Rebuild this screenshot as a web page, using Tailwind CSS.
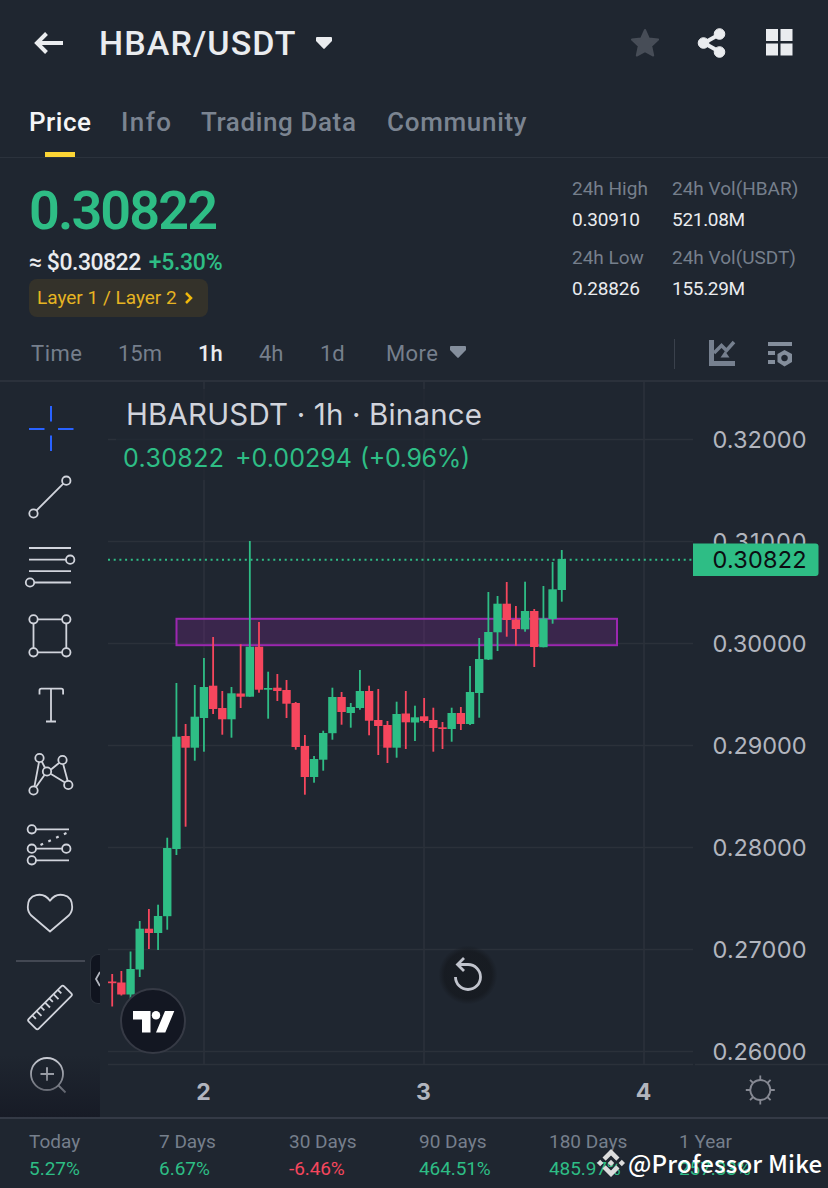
<!DOCTYPE html>
<html lang="en">
<head>
    <meta charset="UTF-8">
    <meta name="viewport" content="width=device-width, initial-scale=1.0">
    <title>HBAR/USDT</title>
    <script src="https://cdn.jsdelivr.net/npm/@tailwindcss/browser@4"></script>
</head>
<body class="bg-[#1f2630] font-['Roboto',sans-serif] text-[#eaecef]">
    <div class="relative w-[828px] h-[1188px] overflow-hidden flex flex-col">
        <!-- Header -->
        <header class="h-[85px] shrink-0 flex items-center pl-[34px] pr-[34px]">
            <svg class="w-[29px] h-[24px]" viewBox="0 0 29 24" fill="none" stroke="#eaecef" stroke-width="4">
                <path d="M29 12H3M12.500 2.500L3 12l9.500 9.500" />
            </svg>
            <h1 class="ml-[36px] w-[196px] text-[34px] leading-[40px] font-medium tracking-[1.1px] whitespace-nowrap">HBAR/USDT</h1>
            <svg class="ml-[21px] w-[16px] h-[12px]" viewBox="0 0 16 12" fill="#eaecef"><path d="M1 0h14q1 0 1 1v3L8.700 11.600q-.7.7-1.400 0L0 4V1q0-1 1-1z" /></svg>
            <div class="ml-auto flex items-center">
                <svg class="w-[30px] h-[30px]" viewBox="0 0 30 30" fill="#474d57" stroke="#474d57" stroke-width="2" stroke-linejoin="round"><path d="M15 2l3.900 8.600 9.200 1-6.900 6.300 2 9.600L15 23l-8.200 4.500 2-9.600-6.900-6.300 9.200-1z" /></svg>
                <svg class="ml-[37px] w-[30px] h-[30px]" viewBox="0 0 30 30" fill="#eaecef" stroke="#eaecef">
                    <path d="M23 6L7 15l16 9" fill="none" stroke-width="4" />
                    <circle cx="22.500" cy="6" r="5.300" /><circle cx="6.500" cy="15" r="5.300" /><circle cx="22.500" cy="24" r="5.300" />
                </svg>
                <svg class="ml-[39px] mr-px w-[27px] h-[27px]" viewBox="0 0 27 27" fill="#eaecef"><path d="M0 0h12v12H0zM14.500 0h12v12h-12zM0 14.500h12v12H0zM14.500 14.500h12v12h-12z" /></svg>
            </div>
        </header>

        <!-- Tabs -->
        <nav class="h-[73px] shrink-0 border-b border-[#2b323c] flex pl-[29px] text-[26px] leading-[30px] font-medium tracking-[0.5px] text-[#7b8491]">
            <div class="w-[92px] flex flex-col pt-[22px] text-[#f5f5f7]">
                <span>Price</span>
                <span class="mt-[15px] ml-[16px] w-[30px] h-[5px] bg-[#fcd535]"></span>
            </div>
            <span class="w-[80px] pt-[22px] tracking-[1.4px]">Info</span>
            <span class="w-[186px] pt-[22px] tracking-[0.6px]">Trading Data</span>
            <span class="pt-[22px] tracking-[0.7px]">Community</span>
        </nav>

        <!-- Price summary -->
        <section class="h-[164px] shrink-0 flex justify-between pl-[29px]">
            <div class="flex flex-col items-start pt-[23px]">
                <div class="text-[54px] leading-[60px] font-semibold tracking-[-1.9px] text-[#2ebd85]">0.30822</div>
                <div class="mt-[8px] text-[23px] leading-[28px] font-medium whitespace-nowrap"><span class="tracking-[-0.5px]">≈ $0.30822</span><span class="ml-[8px] tracking-[-0.3px] text-[#2ebd85]">+5.30%</span></div>
                <div class="mt-[2px] w-[179px] h-[38px] rounded-lg bg-[#34322a] pl-[8px] flex items-center text-[19px] text-[#e6b422]">
                    <span>Layer 1 / Layer 2</span>
                    <svg class="ml-[8px] w-[8px] h-[12px]" viewBox="0 0 8 12" fill="none" stroke="#f0b90b" stroke-width="2.500"><path d="M1 1l5 5-5 5" /></svg>
                </div>
            </div>
            <div class="grid grid-cols-[100px_156px] content-start pt-[19px] text-[19px] leading-[24px] whitespace-nowrap">
                <span class="text-[#767f8c]">24h High</span>
                <span class="text-[#767f8c]">24h Vol(HBAR)</span>
                <span class="mt-[7px] tracking-[-0.2px]">0.30910</span>
                <span class="mt-[7px] tracking-[-0.3px]">521.08M</span>
                <span class="mt-[14px] text-[#767f8c]">24h Low</span>
                <span class="mt-[14px] text-[#767f8c]">24h Vol(USDT)</span>
                <span class="mt-[7px] tracking-[-0.2px]">0.28826</span>
                <span class="mt-[7px] tracking-[-0.3px]">155.29M</span>
            </div>
        </section>

        <!-- Intervals -->
        <section class="h-[60px] shrink-0 border-b-2 border-[#2b313b] flex items-center pl-[31px] pt-[5px] pr-[35px] text-[22px] text-[#767f8c]">
            <span class="w-[87px] tracking-[0.5px]">Time</span>
            <span class="w-[80px]">15m</span>
            <span class="w-[61px] font-medium text-[#eaecef]">1h</span>
            <span class="w-[61px]">4h</span>
            <span class="w-[66px]">1d</span>
            <span class="w-[64px] tracking-[0.4px]">More</span>
            <svg class="-mt-[3px] w-[16px] h-[12px]" viewBox="0 0 16 12" fill="#848e9c"><path d="M1 0h14q1 0 1 1v3L8.700 11.600q-.7.7-1.400 0L0 4V1q0-1 1-1z" /></svg>
            <div class="ml-auto h-[30px] w-px bg-[#3a414c]"></div>
            <svg class="-mt-[2px] ml-[34px] w-[27px] h-[28px]" viewBox="0 0 27 28" fill="#76808f">
                <path d="M0 1h5v21h21v5H0z" />
                <path d="M5 14L12.500 6.500l5 5L25 3" fill="none" stroke="#76808f" stroke-width="3.500" />
                <path d="M16 12l4.500 6.500h-9z" />
            </svg>
            <svg class="ml-[32px] w-[25px] h-[26px]" viewBox="0 0 25 26" fill="#848e9c">
                <path d="M0 1h24v4H0zM0 10h7v4H0zM0 19h7v4H0z" />
                <path fill-rule="evenodd" d="M16.500 9L24 13v8l-7.500 4.500L9.500 21v-8zM16.500 13.700a3.300 3.300 0 1 0 .01 0z" />
            </svg>
        </section>

        <!-- Chart area -->
        <main class="h-[735px] shrink-0 flex">
            <!-- Drawing tools -->
            <aside class="relative w-[100px] flex flex-col pl-[20px] pt-[17px] gap-[9px]">
                <svg class="w-[60px] h-[60px] shrink-0" viewBox="0 0 60 60" stroke="#2962ff" stroke-width="2"><path d="M9 30h15.500M38 30h15.500M31 7v15.500M31 36.500V52" /></svg>
                <svg class="w-[60px] h-[60px] shrink-0" viewBox="0 0 60 60" fill="none" stroke="#d1d4dc" stroke-width="1.800">
                    <circle cx="13.500" cy="45.500" r="4.200" /><circle cx="46.300" cy="12.700" r="4.200" /><path d="M16.500 42.500l26.800-26.800" />
                </svg>
                <svg class="w-[60px] h-[60px] shrink-0" viewBox="0 0 60 60" fill="none" stroke="#d1d4dc" stroke-width="1.800">
                    <path d="M9 11h42M9 22.700h37M9 34.200h42M14 45.500h37" /><circle cx="50.200" cy="22.700" r="4.200" /><circle cx="10" cy="45.500" r="4.200" />
                </svg>
                <svg class="w-[60px] h-[60px] shrink-0" viewBox="0 0 60 60" fill="none" stroke="#d1d4dc" stroke-width="1.800">
                    <path d="M17.700 13.300h24.500M17.700 46.300h24.500M13.500 17.500v24.500M46.300 17.500v24.500" />
                    <circle cx="13.500" cy="13.300" r="4.200" /><circle cx="46.300" cy="13.300" r="4.200" /><circle cx="13.500" cy="46.300" r="4.200" /><circle cx="46.300" cy="46.300" r="4.200" />
                </svg>
                <svg class="w-[60px] h-[60px] shrink-0" viewBox="0 0 60 60" fill="none" stroke="#d1d4dc" stroke-width="1.800">
                    <path d="M19.500 19.500v-4q0-1.800 1.800-1.800h20q1.800 0 1.800 1.800v4M31 13.700v32.800M26 46.500h10" />
                </svg>
                <svg class="w-[60px] h-[60px] shrink-0" viewBox="0 0 60 60" fill="none" stroke="#d1d4dc" stroke-width="1.800">
                    <path d="M19 18.200l-4.500 24M21.800 17.500l3 6M31 25.500l8-6.500M24.500 31l-8.500 12M31 30l14 8.500M43.200 20.200l4.500 16.800" />
                    <circle cx="19.500" cy="14" r="4.200" /><circle cx="42.500" cy="16" r="4.200" /><circle cx="27" cy="27.500" r="4.200" /><circle cx="13.500" cy="46.500" r="4.200" /><circle cx="48.300" cy="41" r="4.200" />
                </svg>
                <svg class="w-[60px] h-[60px] shrink-0" viewBox="0 0 60 60" fill="none" stroke="#d1d4dc" stroke-width="1.800">
                    <path d="M16 16.300h33M16 35.700h26M16 47.300h33" />
                    <path d="M20.500 32L46.500 20" stroke-width="2.200" stroke-dasharray="2.800 5.800" />
                    <circle cx="11.800" cy="16.300" r="4.200" /><circle cx="11.800" cy="35.700" r="4.200" /><circle cx="46.300" cy="35.700" r="4.200" /><circle cx="11.800" cy="47.300" r="4.200" />
                </svg>
                <svg class="w-[60px] h-[60px] shrink-0" viewBox="0 0 60 60" fill="none" stroke="#d1d4dc" stroke-width="1.800" stroke-linejoin="round">
                    <path d="M30 18.700C23 9 7.800 11.500 7.800 25c0 3.500 1.500 6.500 3.500 8.500L30 49.500 48.700 33.500c2-2 3.500-5 3.500-8.500C52.200 11.500 37 9 30 18.700z" />
                </svg>
                <div class="mt-[9px] -ml-[4px] w-[69px] h-[2px] shrink-0 bg-[#434853]"></div>
                <svg class="mt-[6px] w-[60px] h-[60px] shrink-0" viewBox="0 0 60 60" fill="none" stroke="#d1d4dc" stroke-width="1.800">
                    <g transform="rotate(-45 30 30.500)">
                        <rect x="5" y="23.500" width="50" height="14" rx="2" />
                        <path d="M12 23.500v5M18 23.500v7M24 23.500v5M30 23.500v7M36 23.500v5M42 23.500v7M48 23.500v5" />
                    </g>
                </svg>
                <svg class="w-[60px] h-[60px] shrink-0" viewBox="0 0 60 60" fill="none" stroke="#d1d4dc" stroke-width="1.800">
                    <circle cx="27" cy="28" r="16" /><path d="M20.500 28h13.500M27 21.300v13.500M38 39l7.500 7.500" />
                </svg>
                <div class="absolute left-0 bottom-0 w-[100px] h-[62px] bg-gradient-to-b from-[#171b26]/0 to-[#171b26]"></div>
                <div class="absolute left-[90px] top-[572px] w-[10px] h-[50px] rounded-l-lg bg-[#10141f] border border-r-0 border-[#2b313b] flex items-center">
                    <svg class="ml-[3px] w-[6px] h-[16px]" viewBox="0 0 6 16" fill="none" stroke="#b2b5be" stroke-width="1.800"><path d="M6 1L2 8l4 7" /></svg>
                </div>
            </aside>

            <svg class="w-[728px] h-[735px]" viewBox="100 382 728 735" font-family="Inter, sans-serif">
                <defs>
                    <radialGradient id="resetShade">
                        <stop offset="0.8" stop-color="#161a20" stop-opacity=".85" />
                        <stop offset="1" stop-color="#161a20" stop-opacity="0" />
                    </radialGradient>
                </defs>
                <g stroke="#2b313a" stroke-width="2">
                    <path d="M108 439.500h585M108 541.500h585M108 643.500h585M108 745.500h585M108 847.500h585M108 949.500h585M108 1051.500h585" stroke-width="1.500" />
                    <path d="M204 382v682M424 382v682M644 382v682" stroke-width="1.700" />
                    <path d="M108 1064.500h585M695 1064.500h133" stroke-width="1.500" />
                </g>
                <rect x="116" y="389" width="375" height="46" fill="#1f2630" fill-opacity=".7" />
                <rect x="116" y="435" width="366" height="45" fill="#1f2630" fill-opacity=".7" />

                <rect x="176.500" y="618.800" width="440.500" height="26.400" fill="#9c27b0" fill-opacity=".22" stroke="#9c27b0" stroke-width="2" />
                <path d="M108 559.700h585" stroke="#2ebd85" stroke-width="2" stroke-dasharray="2 3.700" />
                <g id="candles"></g>

                <text x="126" y="425" font-size="29.500" fill="#d1d4dc" textLength="356">HBARUSDT · 1h · Binance</text>
                <g font-size="25" fill="#2ebd85">
                    <text x="123" y="466.500" textLength="101">0.30822</text>
                    <text x="235" y="466.500" textLength="117">+0.00294</text>
                    <text x="360" y="466.500" textLength="110">(+0.96%)</text>
                </g>

                <g font-size="23.500" fill="#b2b5be">
                    <text x="712.500" y="447.500" textLength="94">0.32000</text>
                    <text x="712.500" y="549.500" textLength="94">0.31000</text>
                    <text x="712.500" y="651.500" textLength="94">0.30000</text>
                    <text x="712.500" y="753.500" textLength="94">0.29000</text>
                    <text x="712.500" y="855.500" textLength="94">0.28000</text>
                    <text x="712.500" y="957.500" textLength="94">0.27000</text>
                    <text x="712.500" y="1059.500" textLength="94">0.26000</text>
                </g>
                <path d="M693 543.500h122.500q3 0 3 3v26.500q0 3-3 3H693z" fill="#2ebd85" />
                <text x="712.500" y="568" font-size="23.500" fill="#0c0e12" textLength="94">0.30822</text>

                <g font-size="23" font-weight="700" fill="#b2b5be" text-anchor="middle">
                    <text x="203.500" y="1100">2</text>
                    <text x="423.500" y="1100">3</text>
                    <text x="643.500" y="1100">4</text>
                </g>

                <!-- TradingView badge -->
                <circle cx="153" cy="1021" r="32" fill="#131722" stroke="#363a45" stroke-width="2" />
                <path d="M133 1011h17.500v21.600H142V1019.500h-9zM165 1011h9.300l-9 21.600h-9.300z" fill="#fff" />
                <circle cx="156" cy="1015.200" r="4.200" fill="#fff" />

                <!-- Reset view -->
                <circle cx="468" cy="975" r="29.500" fill="url(#resetShade)" />
                <path d="M455.500 977A12.500 12.500 0 1 0 468 964.500h-9M464 958L457.500 964.500l6.500 6.500" fill="none" stroke="#c1c4cd" stroke-width="2.800" />

                <!-- Axis settings -->
                <g fill="none" stroke="#868993" stroke-width="1.800">
                    <circle cx="760.300" cy="1090" r="10" />
                    <path d="M760.300 1080v-4.500M760.300 1100v4.500M750.300 1090h-4.500M770.300 1090h4.500M753.200 1083l-3.200-3.200M767.400 1083l3.200-3.200M753.200 1097l-3.200 3.200M767.400 1097l3.200 3.200" />
                </g>
            </svg>
        </main>

        <!-- Performance -->
        <footer class="h-[71px] shrink-0 border-t-2 border-[#343a46] grid grid-cols-[repeat(6,130px)] pl-[29px] pt-[11px] text-[19px] leading-[24px] text-[#2ebd85] whitespace-nowrap">
            <div><p class="text-[#767f8c]">Today</p><p class="mt-[3px]">5.27%</p></div>
            <div><p class="text-[#767f8c]">7 Days</p><p class="mt-[3px]">6.67%</p></div>
            <div><p class="text-[#767f8c]">30 Days</p><p class="mt-[3px] tracking-[-0.1px] text-[#f6465d]">-6.46%</p></div>
            <div><p class="text-[#767f8c]">90 Days</p><p class="mt-[3px] tracking-[-0.1px]">464.51%</p></div>
            <div><p class="text-[#767f8c]">180 Days</p><p class="mt-[3px] tracking-[-0.1px]">485.97%</p></div>
            <div><p class="text-[#767f8c]">1 Year</p><p class="mt-[3px] tracking-[-0.1px]">257.33%</p></div>
        </footer>

        <!-- Author tag -->
        <div class="absolute left-[597px] top-[1145px] flex items-center text-[24px] leading-[36px] font-medium tracking-[0.2px] text-white font-['Noto_Sans_CJK_SC',sans-serif] whitespace-nowrap">
            <svg class="w-[28px] h-[28px]" viewBox="0 0 28 28" fill="#dcdcdc">
                <path d="M14 0l8.500 8.500-3.200 3.200L14 6.400l-5.300 5.300-3.200-3.200zM14 28l-8.500-8.500 3.200-3.200 5.300 5.300 5.300-5.300 3.200 3.200zM3.200 10.800L6.400 14l-3.200 3.200L0 14zM24.800 10.800L28 14l-3.200 3.200-3.200-3.200zM14 10.800l3.200 3.200-3.200 3.200-3.200-3.200z" />
            </svg>
            <span class="ml-[3px]">@Professor Mike</span>
        </div>
    </div>

    <script>
        // [direction, high, body top, body bottom, low] in chart y units
        const candles = [
            ["r", 974, 981.5, 983.2, 1006.5], ["r", 971, 982.5, 994.5, 995.5], ["g", 951.5, 969, 994.5, 1000], ["g", 921, 928.7, 969.5, 977],
            ["r", 909, 928.7, 933, 949], ["g", 904.7, 916, 933, 950], ["g", 837.7, 848, 916.2, 929.7], ["g", 683, 736.7, 849, 855],
            ["r", 724, 736, 747.7, 826.7], ["g", 685, 716.7, 747.7, 760.7], ["g", 658, 687, 718, 751.7], ["r", 637, 685.7, 709, 714],
            ["r", 691, 708, 719.3, 734.7], ["g", 687, 693.3, 719.3, 737.7], ["r", 644.3, 693.5, 696.7, 708], ["g", 541, 646.7, 696.7, 696.7],
            ["r", 622, 646.7, 689.7, 692.7], ["g", 671.7, 688, 689.7, 718.7], ["r", 674, 687.7, 691, 701], ["r", 680, 690, 703.7, 718],
            ["r", 702, 703, 747, 749.7], ["r", 735, 746, 777, 794.7], ["g", 756, 759, 777, 782.7], ["g", 730.7, 733, 759.7, 770.7],
            ["g", 687.7, 697, 733.2, 739.7], ["r", 692, 697, 712, 724.7], ["g", 703, 707, 713, 727.7], ["g", 670, 691, 708, 709.7],
            ["r", 685.7, 691, 720.7, 735.3], ["r", 689, 720, 726, 755], ["r", 721, 725, 747.7, 763], ["g", 701.7, 714, 747.7, 757.7],
            ["r", 691, 713.5, 722.3, 749], ["g", 705.7, 717.3, 722.5, 741], ["r", 698, 716.3, 721, 722.7], ["r", 707.7, 720, 728, 751.7],
            ["r", 722, 727.3, 729, 749], ["g", 707.7, 713, 729, 741.7], ["r", 707, 713, 724, 730], ["g", 666, 692, 724, 725],
            ["g", 638, 659, 693, 717.7], ["g", 592, 632, 659.5, 660], ["g", 596, 603.7, 632.3, 651], ["r", 582, 603.7, 620, 636.7],
            ["r", 606, 619.5, 629, 645.7], ["g", 581.7, 611, 629.3, 631.7], ["r", 609, 611, 647, 667], ["g", 586, 618.5, 647.2, 647.3],
            ["g", 562, 589.3, 619, 623.7], ["g", 550, 559, 590, 601.7]
        ];
        const colors = { r: "#f6465d", g: "#2ebd85" };
        document.getElementById("candles").innerHTML = candles.map(([dir, high, top, bottom, low], i) => {
            const x = 112.2 + i * 9.175;
            return `<g fill="${colors[dir]}">
                <rect x="${x - 0.9}" y="${high}" width="1.8" height="${low - high}" />
                <rect x="${x - 4.2}" y="${top}" width="8.4" height="${bottom - top}" />
            </g>`;
        }).join("");
    </script>
</body>
</html>
